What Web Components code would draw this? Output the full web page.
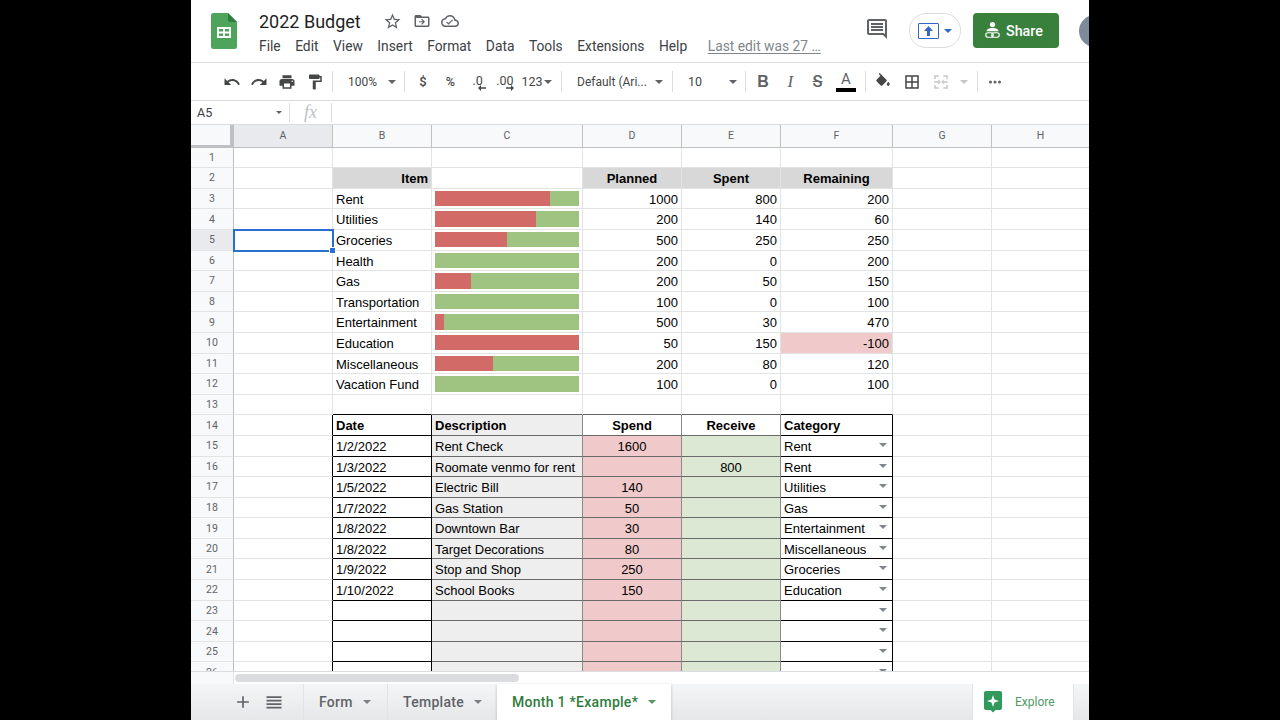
<!DOCTYPE html>
<html>
<head>
<meta charset="utf-8">
<title>2022 Budget</title>
<style>
  html, body { margin: 0; height: 100%; background: #000; overflow: hidden; }
  body { display: flex; justify-content: center; font-family: Roboto, "Liberation Sans", sans-serif; }
</style>
</head>
<body>
<sheets-app></sheets-app>

<script>
const ICONS = {
  undo: "M12.5 8c-2.65 0-5.05.99-6.9 2.6L2 7v9h9l-3.62-3.62c1.39-1.16 3.16-1.88 5.12-1.88 3.54 0 6.55 2.31 7.6 5.5l2.37-.78C21.08 11.03 17.15 8 12.5 8z",
  redo: "M18.4 10.6C16.55 8.99 14.15 8 11.5 8c-4.65 0-8.58 3.03-9.96 7.22L3.9 16c1.05-3.19 4.05-5.5 7.6-5.5 1.95 0 3.73.72 5.12 1.88L13 16h9V7l-3.6 3.6z",
  print: "M19 8H5c-1.66 0-3 1.34-3 3v6h4v4h12v-4h4v-6c0-1.66-1.34-3-3-3zm-3 11H8v-5h8v5zm3-7c-.55 0-1-.45-1-1s.45-1 1-1 1 .45 1 1-.45 1-1 1zm-1-9H6v4h12V3z",
  paint: "M18 4V3c0-.55-.45-1-1-1H5c-.55 0-1 .45-1 1v4c0 .55.45 1 1 1h12c.55 0 1-.45 1-1V6h1v4H9v11c0 .55.45 1 1 1h2c.55 0 1-.45 1-1v-9h8V4h-3z",
  star: "M22 9.24l-7.19-.62L12 2 9.19 8.63 2 9.24l5.46 4.73L5.82 21 12 17.27 18.18 21l-1.63-7.03L22 9.24zM12 15.4l-3.76 2.27 1-4.28-3.32-2.88 4.38-.38L12 6.1l1.71 4.04 4.38.38-3.32 2.88 1 4.28L12 15.4z",
  move: "M20 6h-8l-2-2H4c-1.1 0-2 .9-2 2v12c0 1.1.9 2 2 2h16c1.1 0 2-.9 2-2V8c0-1.1-.9-2-2-2zm0 12H4V8h16v10zM12 17l4-4-4-4-1.1 1.1 2.1 2.1H8v1.6h5l-2.1 2.1z",
  cloud: "M19.35 10.04C18.67 6.59 15.64 4 12 4 9.11 4 6.6 5.64 5.35 8.04 2.34 8.36 0 10.91 0 14c0 3.31 2.69 6 6 6h13c2.76 0 5-2.24 5-5 0-2.64-2.05-4.78-4.65-4.96zM19 18H6c-2.21 0-4-1.79-4-4 0-2.05 1.53-3.76 3.56-3.97l1.07-.11.5-.95C8.08 7.14 9.94 6 12 6c2.62 0 4.88 1.86 5.39 4.43l.3 1.5 1.53.11c1.56.1 2.78 1.41 2.78 2.96 0 1.65-1.35 3-3 3zm-9-3.2l-2.1-2.1-1.1 1.1 3.2 3.2 6-6-1.1-1.1z",
  comment: "M21.99 4c0-1.1-.89-2-1.99-2H4c-1.1 0-2 .9-2 2v12c0 1.1.9 2 2 2h14l4 4-.01-18zM20 4v13.17L18.83 16H4V4h16zM6 12h12v2H6zm0-3h12v2H6zm0-3h12v2H6z",
  fill: "M16.56 8.94L7.62 0 6.21 1.41l2.38 2.38-5.15 5.15c-.59.59-.59 1.54 0 2.12l5.5 5.5c.29.29.68.44 1.06.44s.77-.15 1.06-.44l5.5-5.5c.59-.58.59-1.53 0-2.12zM19 11.5s-2 2.17-2 3.5c0 1.1.9 2 2 2s2-.9 2-2c0-1.33-2-3.5-2-3.5z",
  borders: "M3 3v18h18V3H3zm8 16H5v-6h6v6zm0-8H5V5h6v6zm8 8h-6v-6h6v6zm0-8h-6V5h6v6z",
  merge: "M3 3h6v2H5v3H3zM15 3h6v5h-2V5h-4zM3 16h2v3h4v2H3zM19 16h2v5h-6v-2h4zM3 11h6.2L7.6 9.4 8.8 9l3 3-3 3-1.2-.4 1.6-1.6H3zM21 11v2h-6.2l1.6 1.6-1.2.4-3-3 3-3 1.2.4-1.6 1.6z",
  more: "M6 10a2 2 0 100 4 2 2 0 000-4zm6 0a2 2 0 100 4 2 2 0 000-4zm6 0a2 2 0 100 4 2 2 0 000-4z",
  plus: "M19 13h-6v6h-2v-6H5v-2h6V5h2v6h6v2z",
  list: "M3 5h18v2.2H3zM3 9.2h18v2.2H3zM3 13.4h18v2.2H3zM3 17.6h18v2.2H3z"
};

class AppIcon extends HTMLElement {
  connectedCallback() {
    const size = this.getAttribute("size") || 18;
    const color = this.getAttribute("color") || "#444746";
    this.attachShadow({ mode: "open" }).innerHTML = `
      <style>:host { display: inline-flex; align-items: center; justify-content: center; } svg { display: block; }</style>
      <svg width="${size}" height="${size}" viewBox="0 0 24 24" fill="${color}" fill-rule="evenodd"><path d="${ICONS[this.getAttribute("name")]}"/></svg>`;
  }
}
customElements.define("app-icon", AppIcon);

class SheetsHeader extends HTMLElement {
  constructor() {
    super();
    this.attachShadow({ mode: "open" }).innerHTML = `
      <style>
        :host { display: flex; height: 62px; border-bottom: 1px solid #dadce0; background: #fff; box-sizing: content-box; overflow: hidden; }
        .logo { margin: 13px 22px 0 20px; flex: none; }
        .titles { flex: none; width: 570px; padding-top: 8px; }
        .top { display: flex; align-items: center; height: 26px; }
        .title { font-size: 18px; color: #1f1f1f; width: 124px; }
        .top app-icon { margin-right: 10.5px; }
        .menu { display: flex; align-items: center; margin-top: 1px; height: 22px; font-size: 13.8px; color: #3c4043; white-space: nowrap; }
        .menu span { margin-right: 14.500px; }
        .menu .last { margin-left: 6px; color: #80868b; text-decoration: underline; text-underline-offset: 2px; margin-right: 0; }
        .right { display: flex; align-items: flex-start; padding-top: 13px; }
        .comment { margin: 4px 20px 0 36px; }
        .pill { display: flex; align-items: center; justify-content: center; gap: 5px; width: 50px; height: 33px; border: 1px solid #dadce0; border-radius: 17px; margin-right: 12px; }
        .present { width: 19px; height: 14px; border: 1.5px solid #3367c6; border-radius: 1px; display: flex; align-items: center; justify-content: center; }
        .caret { width: 0; height: 0; border: 4px solid transparent; border-top: 4px solid #3367c6; border-bottom: 0; }
        .share { display: flex; align-items: center; gap: 6px; width: 86px; height: 35px; box-sizing: border-box; padding-left: 12px; background: #38803c; border-radius: 4px; color: #fff; font-size: 14.300px; font-weight: 500; }
        .avatar { flex: none; width: 32px; height: 32px; margin: 2px 0 0 20px; border-radius: 50%; background: #7c8a99; }
      </style>
      <svg class="logo" width="26" height="36" viewBox="0 0 26 36">
        <path d="M2.5 0H17l9 9v24.500a2.500 2.500 0 0 1-2.500 2.500h-21A2.500 2.500 0 0 1 0 33.500v-31A2.500 2.500 0 0 1 2.500 0z" fill="#4ea45a"/>
        <path d="M17 0l9 9h-6.500A2.500 2.500 0 0 1 17 6.500z" fill="#2f7d41"/>
        <path d="M6 14h14v11H6zM8 16v2.500h4V16zm6 0v2.500h4V16zM8 20.500V23h4v-2.500zm6 0V23h4v-2.500z" fill="#fff" fill-rule="evenodd"/>
      </svg>
      <div class="titles">
        <div class="top">
          <span class="title">2022 Budget</span>
          <app-icon name="star" size="19" color="#5f6368"></app-icon>
          <app-icon name="move" size="18" color="#5f6368"></app-icon>
          <app-icon name="cloud" size="18" color="#5f6368"></app-icon>
        </div>
        <div class="menu">
          <span>File</span><span>Edit</span><span>View</span><span>Insert</span><span>Format</span><span>Data</span><span>Tools</span><span>Extensions</span><span>Help</span>
          <span class="last">Last edit was 27 …</span>
        </div>
      </div>
      <div class="right">
        <app-icon class="comment" name="comment" size="24" color="#5f6368"></app-icon>
        <div class="pill">
          <div class="present"><svg width="9" height="10" viewBox="0 0 9 10"><path d="M4.500 0L9 5H6v5H3V5H0z" fill="#3367c6"/></svg></div>
          <div class="caret"></div>
        </div>
        <div class="share">
          <svg width="15" height="19" viewBox="0 0 20 24" fill="none"><circle cx="10" cy="4" r="3.500" fill="#fff"/><path d="M2 13c0-3 3.500-4.500 8-4.500s8 1.500 8 4.500z" fill="#fff"/><rect x="1" y="15" width="10" height="6" rx="3" stroke="#fff" stroke-width="1.500"/><rect x="9" y="15" width="10" height="6" rx="3" stroke="#fff" stroke-width="1.500"/></svg>
          Share
        </div>
        <div class="avatar"></div>
      </div>`;
  }
}
customElements.define("sheets-header", SheetsHeader);

class SheetsToolbar extends HTMLElement {
  constructor() {
    super();
    this.attachShadow({ mode: "open" }).innerHTML = `
      <style>
        :host { display: flex; align-items: center; height: 37px; padding-left: 27px; border-bottom: 1px solid #dadce0; background: #fff; font-size: 12px; color: #444746; white-space: nowrap; overflow: hidden; }
        .b { flex: none; width: 27.300px; display: flex; align-items: center; justify-content: center; position: relative; height: 24px; }
        .wide { width: 27.600px; }
        .sep { flex: none; width: 1px; height: 21px; background: #dadce0; margin: 0 2px; }
        .drop { flex: none; display: flex; align-items: center; justify-content: space-between; box-sizing: border-box; }
        .caret { display: inline-block; flex: none; width: 0; height: 0; border: 4px solid transparent; border-top: 4px solid #5f6368; border-bottom: 0; }
        .caret.off { border-top-color: #c4c7c5; }
        .num { font-size: 12.500px; position: relative; top: -1px; }
        .arr { position: absolute; top: 15px; left: 50%; }
        .bold { font: 700 16px "Liberation Sans", sans-serif; color: #5f6368; }
        .ital { font: italic 500 17px "Liberation Serif", serif; color: #5f6368; }
        .strike { font: 500 16.500px Roboto, sans-serif; color: #5f6368; text-decoration: line-through; }
        .color { flex-direction: column; font-size: 15px; line-height: 15px; color: #5f6368; height: 26px; box-sizing: border-box; padding-top: 3.500px; justify-content: flex-start; }
        .color i { display: block; flex: none; width: 20px; height: 3.500px; margin-top: 1px; background: #000; }
      </style>
      <div class="b wide"><app-icon name="undo"></app-icon></div>
      <div class="b wide"><app-icon name="redo"></app-icon></div>
      <div class="b wide"><app-icon name="print"></app-icon></div>
      <div class="b wide"><app-icon name="paint"></app-icon></div>
      <div class="sep" style="margin-left:3.600px"></div>
      <div class="drop" style="width:67px;padding:0 6px 0 13px"><span>100%</span><span class="caret"></span></div>
      <div class="sep"></div>
      <div class="b" style="margin-left:2.400px;font-weight:500;font-size:13px">$</div>
      <div class="b" style="font-weight:500;font-size:12.500px">%</div>
      <div class="b"><span class="num">.0</span><svg class="arr" width="8" height="6" viewBox="0 0 8 6"><path d="M3 0L0 3l3 3V3.700h5V2.300H3z" fill="#444746"/></svg></div>
      <div class="b"><span class="num">.00</span><svg class="arr" style="margin-left:1px" width="8" height="6" viewBox="0 0 8 6"><path d="M5 0l3 3-3 3V3.700H0V2.300h5z" fill="#444746"/></svg></div>
      <div class="drop" style="width:36px;padding:0 3px;margin-right:4.500px"><span style="font-size:12.500px">123</span><span class="caret"></span></div>
      <div class="sep"></div>
      <div class="drop" style="width:106px;padding:0 7px 0 13px"><span>Default (Ari...</span><span class="caret"></span></div>
      <div class="sep"></div>
      <div class="drop" style="width:68px;padding:0 6px 0 13px"><span style="font-size:12.500px">10</span><span class="caret"></span></div>
      <div class="sep"></div>
      <div class="b" style="margin-left:1.300px"><span class="bold">B</span></div>
      <div class="b"><span class="ital">I</span></div>
      <div class="b"><span class="strike">S</span></div>
      <div class="b color" style="margin-left:1px"><span>A</span><i></i></div>
      <div class="sep" style="margin:0 3.500px 0 5.500px"></div>
      <div class="b"><app-icon name="fill"></app-icon></div>
      <div class="b" style="margin-left:1.700px"><app-icon name="borders"></app-icon></div>
      <div class="b" style="margin-left:1.700px"><app-icon name="merge" color="#c4c7c5"></app-icon></div>
      <div class="b" style="width:18px"><span class="caret off"></span></div>
      <div class="sep" style="margin-left:4px"></div>
      <div class="b" style="margin-left:1.400px"><app-icon name="more" color="#5f6368"></app-icon></div>`;
  }
}
customElements.define("sheets-toolbar", SheetsToolbar);

class FormulaBar extends HTMLElement {
  constructor() {
    super();
    this.attachShadow({ mode: "open" }).innerHTML = `
      <style>
        :host { display: flex; align-items: center; height: 23px; background: #fff; font-size: 12.500px; color: #3c4043; }
        .name { width: 98px; box-sizing: border-box; padding: 0 6px; display: flex; align-items: center; justify-content: space-between; }
        .caret { width: 0; height: 0; border: 3px solid transparent; border-top: 3px solid #5f6368; border-bottom: 0; margin-right: 1px; }
        .sep { width: 1px; height: 19px; background: #dadce0; }
        .fx { width: 41px; text-align: center; font: italic 18px "Liberation Serif", serif; color: #bdc1c6; }
      </style>
      <div class="name"><span>A5</span><span class="caret"></span></div>
      <div class="sep"></div>
      <div class="fx">fx</div>
      <div class="sep"></div>`;
  }
}
customElements.define("formula-bar", FormulaBar);

class SparkBar extends HTMLElement {
  connectedCallback() {
    const spent = this.getAttribute("spent");
    this.attachShadow({ mode: "open" }).innerHTML = `
      <style>
        :host { display: flex; height: 15.500px; margin: 2px 3px 0; background: #9fc381; }
        div { height: 100%; background: #d26b67; }
      </style>
      <div style="width:${spent}%"></div>`;
  }
}
customElements.define("spark-bar", SparkBar);

const BUDGET = [
  ["Rent", 80, 1000, 800, 200], ["Utilities", 70, 200, 140, 60], ["Groceries", 50, 500, 250, 250],
  ["Health", 0, 200, 0, 200], ["Gas", 25, 200, 50, 150], ["Transportation", 0, 100, 0, 100],
  ["Entertainment", 6, 500, 30, 470], ["Education", 100, 50, 150, -100], ["Miscellaneous", 40, 200, 80, 120],
  ["Vacation Fund", 0, 100, 0, 100]
];
const LEDGER = [
  ["1/2/2022", "Rent Check", "1600", "", "Rent"], ["1/3/2022", "Roomate venmo for rent", "", "800", "Rent"],
  ["1/5/2022", "Electric Bill", "140", "", "Utilities"], ["1/7/2022", "Gas Station", "50", "", "Gas"],
  ["1/8/2022", "Downtown Bar", "30", "", "Entertainment"], ["1/8/2022", "Target Decorations", "80", "", "Miscellaneous"],
  ["1/9/2022", "Stop and Shop", "250", "", "Groceries"], ["1/10/2022", "School Books", "150", "", "Education"],
  ["", "", "", "", ""], ["", "", "", "", ""], ["", "", "", "", ""], ["", "", "", "", ""]
];

class SheetGrid extends HTMLElement {
  constructor() {
    super();
    this.attachShadow({ mode: "open" });
  }
  connectedCallback() {
    let cells = "";
    const cell = (cls, txt) => `<div class="c ${cls}">${txt === undefined ? "" : txt}</div>`;

    cells += `<div class="corner"></div>`;
    "ABCDEFGH".split("").forEach((l, i) => { cells += `<div class="ch ${i == 0 ? "on" : ""}">${l}</div>`; });

    for (let r = 1; r <= 26; r++) {
      cells += `<div class="rh ${r == 5 ? "on" : ""}">${r}</div>`;
      cells += cell(r == 5 ? "sel" : (r >= 14 ? "ar" : ""), r == 5 ? `<i class="handle"></i>` : "");

      if (r == 2) {
        cells += cell("hd bold right", "Item") + cell("") + cell("hd bold center", "Planned") + cell("hd bold center", "Spent") + cell("hd bold center", "Remaining");
      } else if (r >= 3 && r <= 12) {
        const d = BUDGET[r - 3];
        cells += cell("", d[0]) + `<div class="c nopad"><spark-bar spent="${d[1]}"></spark-bar></div>`;
        cells += cell("right", d[2]) + cell("right", d[3]) + cell(d[4] < 0 ? "right neg" : "right", d[4]);
      } else if (r == 13) {
        cells += cell("bb") + cell("bg") + cell("bg") + cell("bg") + cell("bb");
      } else if (r == 14) {
        cells += cell("t1 bold", "Date") + cell("t2 bold gr", "Description") + cell("t2 bold center", "Spend") + cell("t2 bold center", "Receive") + cell("t1 bold", "Category");
      } else if (r >= 15) {
        const d = LEDGER[r - 15];
        cells += cell("t1", d[0]) + cell("t2 gr", d[1]) + cell("t2 red center", d[2]) + cell("t2 grn center", d[3]);
        cells += cell("t1 dd", d[4] + `<i class="tri"></i>`);
      } else {
        cells += cell("") + cell("") + cell("") + cell("") + cell("");
      }
      cells += cell("") + cell("");
    }

    this.shadowRoot.innerHTML = `
      <style>
        :host { display: block; height: 547px; overflow: hidden; background: #fff; border-top: 1px solid #dadce0; box-sizing: border-box; }
        .grid { display: grid; grid-template-columns: 43px 99px 99px 151px 99px 99px 112px 99px 98px; grid-template-rows: 22.600px repeat(26, 20.600px); font: 13px "Liberation Sans", Arial, sans-serif; color: #000; }
        .corner { background: #f8f9fa; border-right: 4px solid #bdc1c6; border-bottom: 3px solid #bdc1c6; box-sizing: border-box; }
        .ch { display: flex; align-items: center; justify-content: center; background: #f8f9fa; border-right: 1px solid #c0c0c0; border-bottom: 1px solid #c0c0c0; box-sizing: border-box; font: 10.500px Roboto, sans-serif; color: #5f6368; }
        .ch.on { background: #e8eaed; }
        .rh { display: flex; align-items: center; justify-content: center; background: #f8f9fa; border-right: 1px solid #c0c0c0; border-bottom: 1px solid #e2e3e3; box-sizing: border-box; font: 10.500px Roboto, sans-serif; color: #5f6368; }
        .rh.on { background: #e8eaed; }
        .c { position: relative; box-sizing: border-box; border-right: 1px solid #e2e3e3; border-bottom: 1px solid #e2e3e3; padding: 3px 3px 0; line-height: 16px; white-space: nowrap; overflow: visible; min-width: 0; }
        .nopad { padding: 0; }
        .bold { font-weight: 700; }
        .right { text-align: right; }
        .center { text-align: center; }
        .hd { background: #d8d8d8; }
        .neg { background: #f0caca; }
        .sel { outline: 2px solid #2a6fcf; outline-offset: -1px; z-index: 2; }
        .handle { position: absolute; right: -4px; bottom: -4px; width: 5px; height: 5px; background: #2a6fcf; border: 1px solid #fff; }
        .ar { border-right-color: #000; }
        .bb { border-bottom-color: #000; }
        .bg { border-bottom-color: #666; }
        .t1 { border-right-color: #000; border-bottom-color: #000; }
        .t2 { border-right-color: #8a8a8a; border-bottom-color: #6a6a6a; }
        .gr { background: #eeeeee; }
        .red { background: #f0caca; }
        .grn { background: #dce8d4; }
        .tri { position: absolute; right: 5px; top: 7px; width: 0; height: 0; border: 4px solid transparent; border-top: 4px solid #80868b; border-bottom: 0; }
      </style>
      <div class="grid">${cells}</div>`;
  }
}
customElements.define("sheet-grid", SheetGrid);

class HScroll extends HTMLElement {
  constructor() {
    super();
    this.attachShadow({ mode: "open" }).innerHTML = `
      <style>
        :host { display: flex; height: 12px; background: #fff; border-top: 1px solid #dadce0; box-sizing: content-box; }
        .pad { width: 42px; background: #f8f9fa; border-right: 1px solid #e2e3e3; }
        .thumb { width: 284px; height: 8px; margin: 2px 0 0 1px; border-radius: 4px; background: #dadce0; }
      </style>
      <div class="pad"></div><div class="thumb"></div>`;
  }
}
customElements.define("h-scroll", HScroll);

class SheetTab extends HTMLElement {
  constructor() {
    super();
    this.attachShadow({ mode: "open" }).innerHTML = `
      <style>
        :host { display: flex; align-items: center; box-sizing: border-box; height: 100%; padding: 0 15px; gap: 10px; font-size: 14px; font-weight: 500; letter-spacing: .28px; color: #5f6368; border-left: 1px solid #e2e3e3; white-space: nowrap; }
        :host([active]) { background: #fff; color: #2e7d3c; box-shadow: 0 1px 3px rgba(60,64,67,.3); border-left: 0; }
        i { width: 0; height: 0; border: 4px solid transparent; border-top: 4px solid currentColor; border-bottom: 0; opacity: .8; }
      </style>
      <slot></slot><i></i>`;
  }
}
customElements.define("sheet-tab", SheetTab);

class SheetTabs extends HTMLElement {
  constructor() {
    super();
    this.attachShadow({ mode: "open" }).innerHTML = `
      <style>
        :host { display: flex; align-items: stretch; height: 36px; background: linear-gradient(#f4f5f6, #e6e7e9); }
        .tools { width: 112px; display: flex; align-items: center; box-sizing: border-box; padding-left: 42px; gap: 11px; }
        .tabs { display: flex; flex: 1; }
        .explore { display: flex; align-items: center; width: 102px; margin-right: 15px; background: #fff; border-left: 1px solid #e2e3e3; border-right: 1px solid #e2e3e3; box-sizing: border-box; padding-left: 11px; gap: 13px; font-size: 12px; color: #4e9a68; }
      </style>
      <div class="tools">
        <app-icon name="plus" size="20" color="#5f6368"></app-icon>
        <app-icon name="list" size="20" color="#5f6368"></app-icon>
      </div>
      <div class="tabs">
        <sheet-tab style="width:84px">Form</sheet-tab>
        <sheet-tab style="width:110px">Template</sheet-tab>
        <sheet-tab active style="width:174px">Month 1 *Example*</sheet-tab>
      </div>
      <div class="explore">
        <svg width="18" height="22" viewBox="0 0 18 22"><path d="M2 0h14a2 2 0 0 1 2 2v15a2 2 0 0 1-2 2h-4.500L9 21.500 6.500 19H2a2 2 0 0 1-2-2V2a2 2 0 0 1 2-2z" fill="#2f9a5b"/><path d="M9 4l1.500 4.500L15 10l-4.500 1.500L9 16l-1.500-4.500L3 10l4.500-1.500z" fill="#fff"/></svg>
        <span>Explore</span>
      </div>`;
  }
}
customElements.define("sheet-tabs", SheetTabs);

class SheetsApp extends HTMLElement {
  constructor() {
    super();
    this.attachShadow({ mode: "open" }).innerHTML = `
      <style>
        :host { display: flex; flex-direction: column; width: 898px; height: 720px; background: #fff; overflow: hidden; flex: none; }
      </style>
      <sheets-header></sheets-header>
      <sheets-toolbar></sheets-toolbar>
      <formula-bar></formula-bar>
      <sheet-grid></sheet-grid>
      <h-scroll></h-scroll>
      <sheet-tabs></sheet-tabs>`;
  }
}
customElements.define("sheets-app", SheetsApp);
</script>
</body>
</html>
